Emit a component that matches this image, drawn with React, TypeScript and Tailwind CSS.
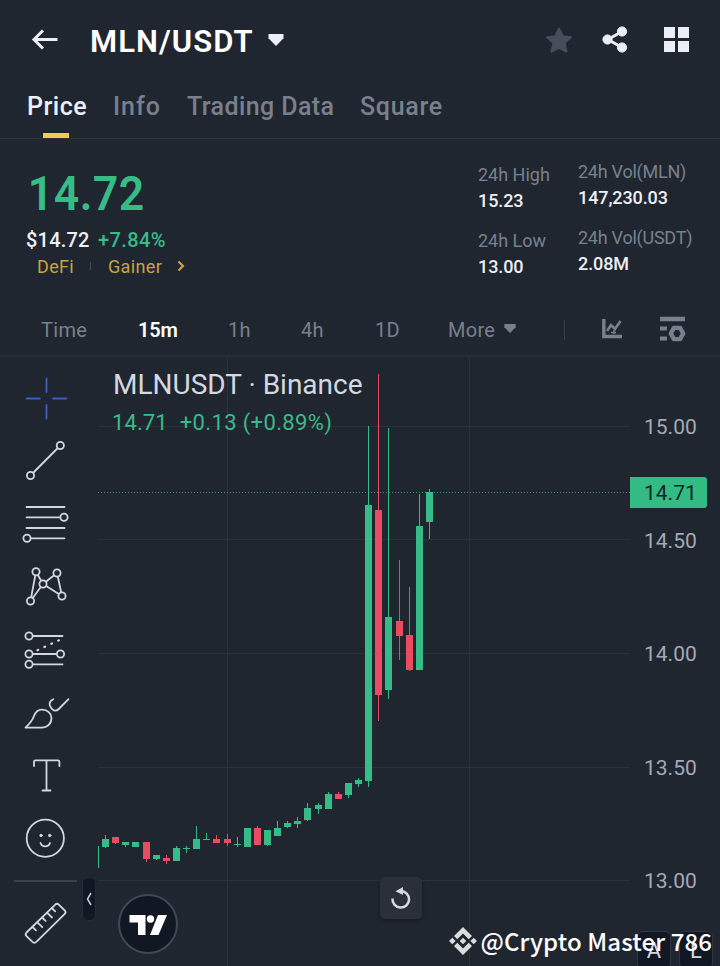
import React from 'react';

type Candle = [x: number, top: number, bottom: number, high: number, low: number, up: 0 | 1];

// x, body top, body bottom, wick top, wick bottom, rising
const candles: Candle[] = [
  [102, 839, 847, 835, 848, 1],
  [112, 837, 843, 837, 844, 0],
  [122, 842, 845, 842, 847, 1],
  [132, 842, 847, 842, 847, 1],
  [143, 842, 859, 842, 862, 0],
  [153, 855, 859, 855, 860, 1],
  [163, 858, 861, 855, 864, 0],
  [173, 848, 861, 846, 861, 1],
  [183, 848, 849, 846, 853, 1],
  [193, 839, 849, 826, 849, 1],
  [203, 839, 840, 833, 840, 1],
  [213, 839, 843, 835, 843, 0],
  [224, 839, 843, 834, 846, 0],
  [234, 844, 845, 837, 847, 1],
  [244, 828, 847, 828, 847, 1],
  [254, 828, 845, 826, 845, 0],
  [264, 830, 845, 830, 846, 1],
  [274, 828, 836, 821, 836, 1],
  [284, 823, 827, 821, 828, 1],
  [294, 821, 824, 817, 828, 1],
  [304, 808, 820, 803, 821, 1],
  [315, 805, 809, 803, 814, 1],
  [325, 794, 809, 792, 809, 1],
  [335, 794, 799, 792, 799, 0],
  [345, 783, 795, 783, 798, 1],
  [355, 780, 784, 778, 787, 1],
  [365, 505, 781, 426, 787, 1],
  [375, 510, 695, 374, 721, 0],
  [385, 617, 690, 428, 699, 1],
  [396, 621, 636, 560, 660, 0],
  [406, 635, 670, 587, 671, 0],
  [416, 526, 670, 494, 670, 1],
  [426, 492, 522, 489, 539, 1],
];

const GREEN = '#37bb87';
const RED = '#e94b60';

const CandleChart = () => (
  <svg width="532" height="609" viewBox="98 357 532 609" className="block" shapeRendering="crispEdges">
    {[426, 539, 653, 767, 880].map((y) => (
      <rect key={y} x="98" y={y} width="532" height="1" fill="#2a313b" />
    ))}
    {[227, 469].map((x) => (
      <rect key={x} x={x} y="357" width="1" height="609" fill="#2a313b" />
    ))}
    <line x1="98" x2="630" y1="492.5" y2="492.5" stroke="#4b8f7c" strokeDasharray="1 2" />
    <rect x="98" y="846" width="1" height="22" fill={GREEN} />
    {candles.map(([x, top, bottom, high, low, up]) => (
      <g key={x} fill={up ? GREEN : RED}>
        <rect x={x + 3} y={high} width="1" height={low - high} />
        <rect x={x} y={top} width="7" height={bottom - top} />
      </g>
    ))}
  </svg>
);

const ToolIcon = ({ children, color = '#d3d6df' }: { children: React.ReactNode; color?: string }) => (
  <svg
    width="63"
    height="63"
    viewBox="0 0 63 63"
    className="block shrink-0"
    fill="none"
    stroke={color}
    strokeWidth="1.8"
    strokeLinecap="round"
    strokeLinejoin="round"
  >
    {children}
  </svg>
);

const Dots = ({ points }: { points: [number, number][] }) => (
  <>
    {points.map(([cx, cy]) => (
      <circle key={`${cx}-${cy}`} cx={cx} cy={cy} r="3.6" fill="#1f2630" />
    ))}
  </>
);

const DrawingTools = () => (
  <div className="flex w-[98px] shrink-0 flex-col pt-[9px] pl-3.5">
    <ToolIcon color="#3c5fc0">
      <path d="M32.5 12.5V26M32.5 39v13.5M12.5 32.5H26M39 32.5h13.5" />
    </ToolIcon>
    <ToolIcon>
      <path d="M16.5 46.5 46.3 16.5" />
      <Dots points={[[16.5, 46.5], [46.3, 16.5]]} />
    </ToolIcon>
    <ToolIcon>
      <path d="M12.5 15h38M12.5 25.3h38M12.5 36h38M12.5 46.3h38" />
      <Dots points={[[50, 25.3], [13, 46.3]]} />
    </ToolIcon>
    <ToolIcon>
      <path d="M16.5 46 22 16.7 29 29 16.5 46M29 29 43 18 48 41 29 29" />
      <Dots points={[[22, 16.7], [43, 18], [29, 29], [48, 41], [16.5, 46]]} />
    </ToolIcon>
    <ToolIcon>
      <path d="M15 18h33.5M15 36h31M15 46.3h33.5" />
      <path d="M23.5 32.2 46 21.8" strokeDasharray="0.8 6.8" strokeWidth="2.2" />
      <Dots points={[[15, 18], [15, 36], [46.5, 36], [15, 46.3]]} />
    </ToolIcon>
    <ToolIcon>
      <path d="M11.5 46.7C16 42.5 18.5 39 20 35c1.5-4.3 4.3-6.4 8-6.4 5.5 0 9.5 3.8 9.5 8.4 0 5.500-4 9.7-10 9.7z" />
      <path d="M39.3 18.2c-3.3 1.5-4.6 4.3-3.2 7 1.3 2.6 3 4.5 5.2 4.5 1.3 0 2.4-.6 3.5-1.7L54.5 18.2" />
    </ToolIcon>
    <ToolIcon>
      <path d="M20 22v-4.2c0-1 .5-1.5 1.5-1.5h22.4c1 0 1.5.5 1.5 1.5V22M32.5 16.5v30M28.5 46.5h8" />
    </ToolIcon>
    <ToolIcon>
      <circle cx="31.3" cy="31.3" r="18.6" />
      <path d="M26.5 36c1.5 4.5 8 4.5 9.5 0" />
      <circle cx="27" cy="28.5" r="1.2" fill="#d3d6df" strokeWidth="1" />
      <circle cx="35.7" cy="28.5" r="1.2" fill="#d3d6df" strokeWidth="1" />
    </ToolIcon>
    <div className="mt-2.5 mb-2.5 h-[2px] w-[63px] shrink-0 bg-[#3b404b]" />
    <ToolIcon>
      <path d="M41 12.8c1.2-1.2 2.8-1.2 4 0l5.8 5.7c1.1 1.2 1.1 2.2 0 3.3L22.6 49.7c-1.6 1.5-3 1.5-4.4 0l-5.7-5.5c-1.2-1.3-1.2-2.4 0-3.7z" />
      <path d="m18.5 35 3.5 3.3M23.3 30.3l5 4.8M28.2 25.5l3.4 3.3M33 20.7l5 4.8M37.8 16l3.4 3.3" />
    </ToolIcon>
  </div>
);

const Caret = ({ className }: { className: string }) => (
  <svg viewBox="0 0 16 12" className={className} fill="currentColor">
    <path d="M.5 0h15v4.2L8 12 .5 4.2z" />
  </svg>
);

const Header = () => (
  <header className="flex h-20 items-center pl-[31px] text-[#eceef5]">
    <svg width="28" height="24" viewBox="0 0 28 24" fill="none" stroke="currentColor" strokeWidth="3">
      <path d="M26.5 11.5H4M12 2.5l-9 9 9 9" />
    </svg>
    <h1 className="mt-[5px] ml-[31px] w-[164px] text-[31px] font-semibold tracking-[1.05px] whitespace-nowrap text-white">MLN/USDT</h1>
    <Caret className="ml-[14px] h-3 w-4" />
    <svg
      width="28"
      height="28"
      viewBox="0 0 28 28"
      className="ml-[261px] text-[#474d5a]"
      fill="currentColor"
      stroke="currentColor"
      strokeWidth="2"
      strokeLinejoin="round"
    >
      <path d="m14 2.5 3.6 7.8 8.3.9-6.3 5.8 1.9 8.6L14 21.5l-7.5 4.1L8.4 17l-6.300-5.8 8.3-.9z" />
    </svg>
    <svg width="28" height="28" viewBox="0 0 28 28" className="ml-7" fill="currentColor" stroke="currentColor">
      <path d="M21 5.500 7 13.500l14 8" fill="none" strokeWidth="3" />
      <circle cx="21" cy="5.5" r="4.600" />
      <circle cx="6.5" cy="13.5" r="4.600" />
      <circle cx="21" cy="21.5" r="4.600" />
    </svg>
    <div className="mb-[1px] ml-[35px] grid grid-cols-2 gap-[2.5px]">
      {[0, 1, 2, 3].map((n) => (
        <span key={n} className="h-[11px] w-[11px] bg-current" />
      ))}
    </div>
  </header>
);

const Tabs = () => (
  <nav className="flex h-[59px] border-b border-[#2b323c] pl-[27px] text-[25px] leading-[53px] font-medium tracking-[0.5px] whitespace-nowrap text-[#79808c]">
    <div className="flex w-[86px] flex-col text-[#eef0f6]">
      <span className="h-[53px]">Price</span>
      <span className="ml-4 h-[5px] w-[26px] bg-[#edcb56]" />
    </div>
    <span className="w-[74px] tracking-[1px]">Info</span>
    <span className="w-[173px] tracking-[0.4px]">Trading Data</span>
    <span className="tracking-[0.7px]">Square</span>
  </nav>
);

const Stat = ({ label, value }: { label: string; value: string }) => (
  <div className="h-[66px] text-[18px] leading-[26px] whitespace-nowrap">
    <div className="text-[#79808c]">{label}</div>
    <div className="font-medium tracking-[-0.1px] text-[#eef0f6]">{value}</div>
  </div>
);

const Summary = () => (
  <section className="flex h-[164px] pl-[26px]">
    <div className="w-[452px]">
      <div className="mt-[28px] h-[54px] origin-left scale-x-[0.91] pl-0.5 text-[49px] leading-[54px] font-semibold tracking-[0.5px] text-[#37bb87]">
        14.72
      </div>
      <div className="-mt-px flex h-[40px] items-center gap-2 text-[20px] font-medium">
        <span className="w-[64px] tracking-[0.2px] text-[#eef0f6]">$14.72</span>
        <span className="tracking-[0.4px] text-[#37bb87]">+7.84%</span>
      </div>
      <div className="-mt-[4px] flex h-5 items-center pl-[11px] text-[18px] tracking-[0.35px] text-[#c9a243]">
        <span className="w-[37px]">DeFi</span>
        <span className="ml-4 h-2 w-px bg-[#414854]" />
        <span className="ml-[17px] w-[55px]">Gainer</span>
        <svg width="8" height="12" viewBox="0 0 8 12" className="ml-[14px]" fill="none" stroke="currentColor" strokeWidth="2.2">
          <path d="m1.5 1.5 4.5 4.5-4.5 4.5" />
        </svg>
      </div>
    </div>
    <div className="w-[100px] pt-[23px]">
      <Stat label="24h High" value="15.23" />
      <Stat label="24h Low" value="13.00" />
    </div>
    <div className="pt-5 tracking-[-0.25px]">
      <Stat label="24h Vol(MLN)" value="147,230.03" />
      <Stat label="24h Vol(USDT)" value="2.08M" />
    </div>
  </section>
);

const Intervals = () => (
  <div className="flex h-[54px] items-center border-b-2 border-[#272e38] pt-px pl-[41px] text-[20px] tracking-[0.3px] whitespace-nowrap text-[#79808c]">
    <span className="w-[97px]">Time</span>
    <span className="w-[90px] font-semibold tracking-[-0.2px] text-white">15m</span>
    <span className="w-[73px]">1h</span>
    <span className="w-[74px]">4h</span>
    <span className="w-[73px]">1D</span>
    <span className="w-12">More</span>
    <Caret className="mb-[3px] ml-2 h-[9px] w-3" />
    <span className="ml-12 h-5 w-px bg-[#39404b]" />
    <svg width="20" height="20" viewBox="0 0 20 20" className="mb-[2px] ml-[37px]" fill="none" stroke="currentColor">
      <path d="M1.8 0v17.5H20" strokeWidth="3.4" />
      <path d="m5 12 4-6 4 4 5.5-8" strokeWidth="2.6" />
      <path d="M12 11v4M9 13.500h5" strokeWidth="1.5" />
    </svg>
    <svg width="26" height="26" viewBox="0 0 26 26" className="mb-px ml-[38px]" fill="none" stroke="currentColor">
      <path d="M0 3h25" strokeWidth="4.5" />
      <path d="M0 12.5h7M0 22.5h7" strokeWidth="3.8" />
      <path d="M13.9 11.9h6.200l3.100 5.600-3.100 5.600h-6.200l-3.100-5.600z" strokeWidth="4.4" strokeLinejoin="round" />
    </svg>
  </div>
);

const PriceAxis = () => (
  <div className="w-[90px] pt-[14px] pl-[14px] text-[21px] text-[#a4a9b4]">
    {['15.00', '14.50', '14.00', '13.50', '13.00'].map((price) => (
      <div key={price} className="h-[113.5px] leading-[113.5px]">{price}</div>
    ))}
  </div>
);

const Watermark = () => (
  <div className="absolute right-2 bottom-[7px] flex h-9 items-center text-white">
    <svg width="28" height="28" viewBox="0 0 28 28" className="mr-[3px]" fill="#dcdcdc">
      <path d="m14 0 9 9-3.300 3.300L14 6.600l-5.700 5.700L5 9zM14 28l-9-9 3.300-3.300 5.700 5.700 5.700-5.700L23 19zM3.300 10.700 6.600 14l-3.300 3.300L0 14zM24.700 10.700 28 14l-3.300 3.300-3.300-3.300zM14 10.700l3.300 3.300-3.300 3.300-3.300-3.300z" />
    </svg>
    <span className="font-['Noto_Sans_CJK_SC',sans-serif] text-[24px] leading-9 font-medium tracking-[0.1px] whitespace-nowrap">
      @Crypto Master 786
    </span>
  </div>
);

const ScaleButton = ({ label }: { label: string }) => (
  <div className="h-[38px] w-[34px] rounded-[6px] border border-[#303642] bg-[#111824] text-center text-[22px] leading-[37px] text-[#d3d6df]">
    {label}
  </div>
);

export default function App() {
  return (
    <div className="relative h-[966px] w-[720px] overflow-hidden bg-[#1f2630] font-[Roboto,sans-serif]">
      <Header />
      <Tabs />
      <Summary />
      <Intervals />
      <main className="relative flex h-[609px]">
        <DrawingTools />
        <CandleChart />
        <PriceAxis />

        {/* legend and controls floating over the chart */}
        <div className="absolute top-2 left-[113px] whitespace-nowrap">
          <div className="text-[28px] leading-10 text-[#d5d8e0]">MLNUSDT · Binance</div>
          <div className="flex gap-3 text-[22px] leading-9 text-[#37bb87]">
            <span className="-ml-px tracking-[0.1px]">14.71</span>
            <span className="tracking-[0.35px]">+0.13 (+0.89%)</span>
          </div>
        </div>
        <div className="absolute top-[120px] left-[630px] h-[31px] w-[77px] rounded-r-[3px] bg-[#32bc84] pl-[14px] text-[21px] leading-[32px] text-[#16202a]">
          14.71
        </div>
        <div className="absolute top-[520px] left-[82px] flex h-[44px] w-[14px] items-center justify-center rounded-[6px] border border-[#262c37] bg-[#111824]">
          <svg width="6" height="14" viewBox="0 0 6 14" fill="none" stroke="#c6cad3" strokeWidth="1.5">
            <path d="M5 1 1.5 7 5 13" />
          </svg>
        </div>
        <div className="absolute top-[537px] left-[118px] h-[60px] w-[60px] rounded-full border-2 border-[#434753] bg-[#111824]">
          <svg width="56" height="56" viewBox="120 896 56 56" fill="#fff">
            <path d="M129.5 915h16v20H138v-12.5h-8.5zM158 915h9l-8.5 20H150z" />
            <circle cx="150.5" cy="919" r="3.7" />
          </svg>
        </div>
        <div className="absolute top-[520px] left-[380px] h-[42px] w-[42px] rounded-[5px] bg-[#2a2f3a] shadow-[0_2px_5px_rgba(0,0,0,0.3)]">
          <svg width="42" height="42" viewBox="380 877 42 42" fill="none" stroke="#d5d8e0" strokeWidth="2.5">
            <path d="M392.5 898.5a8.3 8.3 0 1 0 8.3-7.5h-1" />
            <path d="M395.5 891.3l7.5-4.3v8z" fill="#d5d8e0" stroke="none" />
          </svg>
        </div>
        <div className="absolute top-[574px] left-[637px] flex gap-2">
          <ScaleButton label="A" />
          <ScaleButton label="L" />
        </div>
        <Watermark />
      </main>
    </div>
  );
}
